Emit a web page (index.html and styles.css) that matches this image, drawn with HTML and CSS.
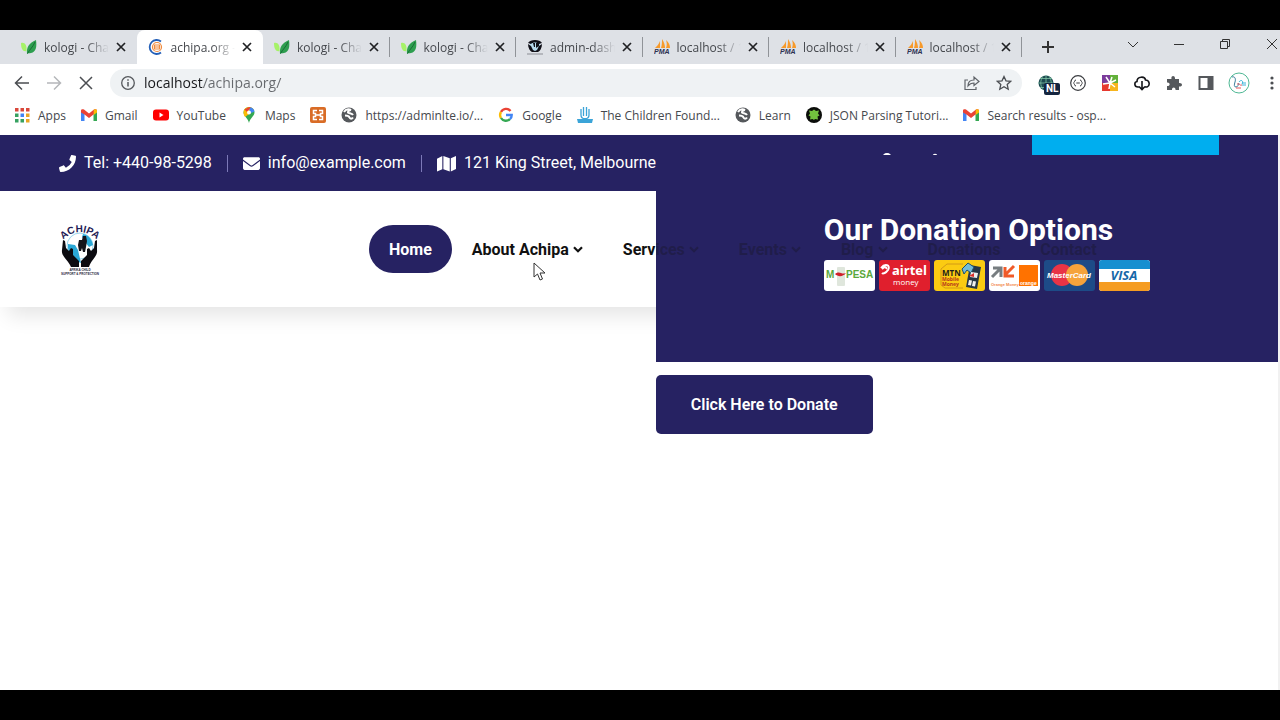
FILE: index.html
```html
<!DOCTYPE html>
<html lang="en">
<head>
    <meta charset="UTF-8">
    <meta name="viewport" content="width=device-width, initial-scale=1.0">
    <title>achipa.org</title>
    <link rel="stylesheet" href="styles.css">
</head>
<body>
    <!-- Shared icons -->
    <svg class="sprite" aria-hidden="true">
        <symbol id="leaf" viewBox="0 0 16 16">
            <path d="M0 4c4-1 6 2 5.500 8C2 13 0 10 0 4z" fill="#a6f268"/>
            <path d="M15 1c1 7 0 12-5 13-2 .4-3 0-4 1-.6-7 2-11 9-14z" fill="#2e9e4f"/>
            <path d="M14 3C12 8 9 10 6.500 14.500" stroke="#176b35" stroke-width="1" fill="none"/>
        </symbol>
        <symbol id="pma" viewBox="0 0 16 16">
            <path d="M6 2v7H1c2-2 4-4 5-7zM8 0c2 3 3 6 3 9H7c1-3 1-6 1-9zM12 1c3 3 4 5 4 8h-4c1-3 1-5 0-8z" fill="#f79a2b"/>
            <text x="0" y="15" class="pma-text">PMA</text>
        </symbol>
        <symbol id="cross" viewBox="0 0 10 10">
            <path d="M1 1l8 8M9 1L1 9" fill="none" stroke="currentColor" stroke-width="1.700"/>
        </symbol>
        <symbol id="globe" viewBox="0 0 16 16">
            <circle cx="8" cy="8" r="7.500" fill="#55585c"/>
            <path d="M3 5c2-3 5-3 7-2-2 0-3 1-3 2.500 1 1 4 .5 5 2.500M4 8.500c3 0 4 .5 4.500 2C9 12 11 12 12 10.500" fill="none" stroke="#fff" stroke-width="2"/>
        </symbol>
        <symbol id="gmail" viewBox="0 0 16 12">
            <path d="M0 2v10h3.500V5z" fill="#4285f4"/>
            <path d="M16 2v10h-3.500V5z" fill="#34a853"/>
            <path d="M0 1.500C0 0 2 0 3 .6l5 4 5-4C14 0 16 0 16 1.500l-3.500 4L8 9 3.500 5.500 0 3.500z" fill="#ea4335"/>
            <path d="M12.700.8C14 0 16 0 16 2v1.500l-3.300 2.600z" fill="#fbbc04"/>
        </symbol>
        <symbol id="caret" viewBox="0 0 10 7">
            <path d="M1 1.200l4 4 4-4" fill="none" stroke="currentColor" stroke-width="2.200"/>
        </symbol>
    </svg>

    <div class="browser">
        <!-- Tab strip -->
        <div class="tab-strip">
            <div class="tabs">
                <div class="tab">
                    <svg class="icon"><use href="#leaf"/></svg>
                    <span class="tab-title">kologi - Chat</span>
                    <button type="button" class="tab-close" aria-label="Close tab"><svg><use href="#cross"/></svg></button>
                </div>
                <div class="tab active">
                    <svg class="icon" viewBox="0 0 16 16">
                        <path d="M13 2.500A7 7 0 1 0 13 13.500" fill="none" stroke="#2460b8" stroke-width="1.800"/>
                        <circle cx="9" cy="8" r="4.500" fill="none" stroke="#f08a3c" stroke-width="1.200"/>
                        <path d="M6.500 6h5v4h-5zM6.500 8h5" fill="none" stroke="#f08a3c" stroke-width="1.200"/>
                    </svg>
                    <span class="tab-title">achipa.org - A</span>
                    <button type="button" class="tab-close" aria-label="Close tab"><svg><use href="#cross"/></svg></button>
                </div>
                <div class="tab">
                    <svg class="icon"><use href="#leaf"/></svg>
                    <span class="tab-title">kologi - Chat</span>
                    <button type="button" class="tab-close" aria-label="Close tab"><svg><use href="#cross"/></svg></button>
                </div>
                <div class="tab">
                    <svg class="icon"><use href="#leaf"/></svg>
                    <span class="tab-title">kologi - Chat</span>
                    <button type="button" class="tab-close" aria-label="Close tab"><svg><use href="#cross"/></svg></button>
                </div>
                <div class="tab">
                    <svg class="icon" viewBox="0 0 16 16">
                        <circle cx="8" cy="7" r="5.500" fill="#b7dcef"/>
                        <path d="M1 4c2-4 12-4 14 0l-3 1c-2-2-6-2-8 0zM1 5l3 2 2 4 2 1 2-1 2-4 3-2c0 4-2 7-4 8H5C3 12 1 9 1 5zM6 4h2v4H7zM9 4h3v3L9 9z" fill="#101018"/>
                        <path d="M0 15h16" stroke="#8b8d94"/>
                    </svg>
                    <span class="tab-title">admin-dashboard</span>
                    <button type="button" class="tab-close" aria-label="Close tab"><svg><use href="#cross"/></svg></button>
                </div>
                <div class="tab">
                    <svg class="icon"><use href="#pma"/></svg>
                    <span class="tab-title">localhost / 12</span>
                    <button type="button" class="tab-close" aria-label="Close tab"><svg><use href="#cross"/></svg></button>
                </div>
                <div class="tab">
                    <svg class="icon"><use href="#pma"/></svg>
                    <span class="tab-title">localhost / 12</span>
                    <button type="button" class="tab-close" aria-label="Close tab"><svg><use href="#cross"/></svg></button>
                </div>
                <div class="tab">
                    <svg class="icon"><use href="#pma"/></svg>
                    <span class="tab-title">localhost / 12</span>
                    <button type="button" class="tab-close" aria-label="Close tab"><svg><use href="#cross"/></svg></button>
                </div>
            </div>
            <button type="button" class="new-tab" aria-label="New tab">
                <svg viewBox="0 0 12 12"><path d="M6 0v12M0 6h12" stroke="currentColor" stroke-width="2"/></svg>
            </button>
            <div class="window-buttons">
                <button type="button" aria-label="Search tabs"><svg viewBox="0 0 12 12"><path d="M1 4l5 5 5-5" fill="none" stroke="currentColor"/></svg></button>
                <button type="button" aria-label="Minimize"><svg viewBox="0 0 12 12"><path d="M1 6.500h10" stroke="currentColor"/></svg></button>
                <button type="button" aria-label="Restore"><svg viewBox="0 0 12 12"><path d="M1.500 3.500h7v7h-7zM3.500 3.500v-2h7v7h-2" fill="none" stroke="currentColor"/></svg></button>
                <button type="button" aria-label="Close"><svg viewBox="0 0 12 12"><path d="M1 1l10 10M11 1L1 11" stroke="currentColor"/></svg></button>
            </div>
        </div>

        <!-- Address bar -->
        <div class="toolbar">
            <button type="button" aria-label="Back"><svg viewBox="0 0 16 16"><path d="M15 8H2M8 1.500L1.500 8 8 14.500" fill="none" stroke="#4b4e52" stroke-width="1.500"/></svg></button>
            <button type="button" aria-label="Forward"><svg viewBox="0 0 16 16"><path d="M1 8h13M8 1.500L14.500 8 8 14.500" fill="none" stroke="#b5b7ba" stroke-width="1.500"/></svg></button>
            <button type="button" aria-label="Stop"><svg viewBox="0 0 16 16"><path d="M2 2l12 12M14 2L2 14" stroke="#4b4e52" stroke-width="1.500"/></svg></button>
            <div class="address">
                <svg class="icon" viewBox="0 0 16 16"><circle cx="8" cy="8" r="6.300" fill="none" stroke="#55585c" stroke-width="1.300"/><path d="M8 7v4.500M8 4.300v1.500" stroke="#55585c" stroke-width="1.500"/></svg>
                <input type="text" aria-label="Address" value="localhost/achipa.org/">
                <button type="button" aria-label="Share"><svg viewBox="0 0 16 16"><path d="M4 5H1v9.500h11V12M4 11c0-4 2-6 6-6V2l5 4.500-5 4V8C7 8 5.500 9 4 11z" fill="none" stroke="#5f6368" stroke-width="1.200"/></svg></button>
                <button type="button" aria-label="Bookmark"><svg viewBox="0 0 16 16"><path d="M8 1.500l2 4.300 4.700.5-3.500 3.200 1 4.700L8 11.800l-4.200 2.400 1-4.700L1.300 6.300 6 5.800z" fill="none" stroke="#4b4e52" stroke-width="1.300"/></svg></button>
            </div>
            <div class="extensions">
                <button type="button" class="badge-host" aria-label="Language">
                    <svg viewBox="0 0 16 16"><circle cx="8" cy="8" r="7.500" fill="#1d4a50"/><path d="M8 0v16M0 8h16M2 3.500h12M2 12.500h12M5 1c-3 5-3 9 0 14M11 1c3 5 3 9 0 14" fill="none" stroke="#7fc3a4" stroke-width=".8"/></svg>
                    <span class="badge">NL</span>
                </button>
                <button type="button" aria-label="JSON viewer"><svg viewBox="0 0 16 16"><circle cx="8" cy="8" r="7.300" fill="#fff" stroke="#3a3c40" stroke-width="1.200"/><path d="M6 5c-2 0-1 2.500-2.500 3C5 8.500 4 11 6 11M10 5c2 0 1 2.500 2.500 3-1.500.5-.5 3-2.500 3M6.300 8h3.500" fill="none" stroke="#3a3c40"/></svg></button>
                <button type="button" aria-label="Colour picker"><svg viewBox="0 0 16 16"><path d="M0 0h8v8H0z" fill="#7b3c9b"/><path d="M8 0h8v8H8z" fill="#63b13a"/><path d="M0 8h8v8H0z" fill="#e6392f"/><path d="M8 8h8v8H8z" fill="#f7b51d"/><path d="M8 8L4 2M8 8l2-6M8 8l6-3M8 8l5 4M8 8l-1 6M8 8L1 9" stroke="#fff" stroke-width="1.500"/></svg></button>
                <button type="button" aria-label="Downloads"><svg viewBox="0 0 16 16"><path d="M5 12H4c-4 0-4-5-1-5.500C3 1 11 1 11.500 5c4 0 5 5.500 1.500 7h-2M8 6v8M5 11.500L8 14.500l3-3" fill="none" stroke="#15161a" stroke-width="1.600"/></svg></button>
                <button type="button" aria-label="Extensions"><svg viewBox="0 0 16 16"><path d="M1 4h4.500c-1-4 4-4 3.500 0H13v4c4-.5 4 4 0 3.500V15H9.500c.5-3.500-4-3.500-3.500 0H1v-4c3.500.5 3.500-4 0-3.500z" fill="#55585c"/></svg></button>
                <button type="button" aria-label="Side panel"><svg viewBox="0 0 16 16"><path d="M1.500 2h13v12h-13z" fill="#fff" stroke="#55585c" stroke-width="2"/><path d="M9.500 2H15v12H9.500z" fill="#55585c"/></svg></button>
                <button type="button" class="avatar" aria-label="Profile"><svg viewBox="0 0 22 22"><circle cx="11" cy="11" r="10" fill="#fff" stroke="#4eb894"/><path d="M4 5c3-1 4 2 3 5s-1 5 1 5 2-2 3-4" fill="none" stroke="#3b7e9c"/><path d="M11 10c2-3 5-1 3 2M15 10v4M17 10v4" fill="none" stroke="#3ab3d8"/><path d="M9 12c2-1 3 2 5 1M8 16h5" fill="none" stroke="#e5555c"/></svg></button>
                <button type="button" aria-label="Menu"><svg viewBox="0 0 16 16"><g fill="#4b4e52"><circle cx="8" cy="3" r="1.600"/><circle cx="8" cy="8" r="1.600"/><circle cx="8" cy="13" r="1.600"/></g></svg></button>
            </div>
        </div>

        <!-- Bookmarks -->
        <nav class="bookmarks" aria-label="Bookmarks">
            <a href="#"><svg class="icon" viewBox="0 0 16 16"><path d="M1 1h3.500v3.500H1zM6.500 1H10v3.500H6.500zM12 1h3.500v3.500H12z" fill="#d9483b"/><path d="M1 6.500h3.500V10H1z" fill="#36a160"/><path d="M6.500 6.500H10V10H6.500z" fill="#4285f4"/><path d="M12 6.500h3.500V10H12z" fill="#e9a624"/><path d="M1 12h3.500v3.500H1zM6.500 12H10v3.500H6.500z" fill="#36a160"/><path d="M12 12h3.500v3.500H12z" fill="#e9a624"/></svg>Apps</a>
            <a href="#"><svg class="icon"><use href="#gmail"/></svg>Gmail</a>
            <a href="#"><svg class="icon" viewBox="0 0 16 16"><rect y="2.500" width="16" height="11" rx="3" fill="#f00"/><path d="M6.500 5.500v5l4-2.500z" fill="#fff"/></svg>YouTube</a>
            <a href="#"><svg class="icon" viewBox="0 0 16 16"><path d="M8 0a5.500 5.500 0 0 0-5.500 5.500C2.500 9 7 11 8 16c1-5 5.500-7 5.500-10.500A5.500 5.500 0 0 0 8 0z" fill="#34a853"/><path d="M8 0a5.500 5.500 0 0 1 5 3.500L4 10C3 8.500 2.500 7 2.500 5.500A5.500 5.500 0 0 1 8 0z" fill="#fbbc04"/><path d="M8 0L3.500 2.500 6 5l4-4.500z" fill="#ea4335"/><path d="M9.500.3C12 1 13 3 13.500 4.500L10 6 8 3.500z" fill="#4285f4"/><circle cx="8" cy="5.500" r="2" fill="#fff"/></svg>Maps</a>
            <a href="#" aria-label="XAMPP"><svg class="icon" viewBox="0 0 16 16"><rect width="16" height="16" rx="2" fill="#d96c26"/><path d="M7 3.500H3.500v3h2v3h-2v3H7M9 3.500h3.500v3h-2v3h2v3H9M6 8h4" fill="none" stroke="#fff" stroke-width="1.500"/></svg></a>
            <a href="#"><svg class="icon"><use href="#globe"/></svg>https://adminlte.io/...</a>
            <a href="#"><svg class="icon" viewBox="0 0 16 16"><g fill="none" stroke-width="2.400"><path d="M12.500 4A5.700 5.700 0 0 0 3 5" stroke="#ea4335"/><path d="M3 5a5.700 5.700 0 0 0 0 6" stroke="#fbbc04"/><path d="M3 11a5.700 5.700 0 0 0 9 1" stroke="#34a853"/><path d="M12 12c1.500-1 1.700-2.500 1.700-4H8" stroke="#4285f4"/></g></svg>Google</a>
            <a href="#"><svg class="icon" viewBox="0 0 16 16"><path d="M0 12h16l-1 4H1z" fill="#3ba4d8"/><path d="M4 2v6c0 5 8 5 8 0V2M6.500 0v9M9.500 0v9" fill="none" stroke="#3ba4d8" stroke-width="1.300"/></svg>The Children Found...</a>
            <a href="#"><svg class="icon"><use href="#globe"/></svg>Learn</a>
            <a href="#"><svg class="icon" viewBox="0 0 16 16"><circle cx="8" cy="8" r="8" fill="#0b0d0a"/><path d="M8 2.500l2 1.500 3-.5-1 3 1.500 2-2 1 .5 3-3-.5L8 13l-1.500-1-2.500.5.500-3-2-1L4 6.500l-1-3L6 4z" fill="#72c13e"/></svg>JSON Parsing Tutori...</a>
            <a href="#"><svg class="icon"><use href="#gmail"/></svg>Search results - osp...</a>
        </nav>

        <!-- Site -->
        <main class="site">
            <div class="topbar">
                <ul class="contact-list">
                    <li><svg viewBox="0 0 16 16"><path d="M15.500.8L12.200 0c-.4 0-.7.100-.9.500L9.800 4c-.1.300 0 .7.300.9L12 6.500A11.500 11.500 0 0 1 6.500 12L4.900 10.100c-.2-.3-.6-.4-.9-.3L.5 11.300c-.4.200-.5.500-.5.900l.8 3.200c.1.400.4.600.8.600C9.600 16 16 9.500 16 1.600c0-.4-.2-.7-.5-.8z" fill="#fff"/></svg>Tel: +440-98-5298</li>
                    <li><svg viewBox="0 0 16 16"><path d="M0 3.500C0 2.600.7 2 1.500 2h13c.8 0 1.500.6 1.500 1.500v.7L8.800 9.600c-.5.300-1.100.3-1.600 0L0 4.200zM0 5.700l6.700 5c.8.500 1.800.5 2.600 0L16 5.700v6.800c0 .8-.7 1.500-1.500 1.500h-13C.7 14 0 13.300 0 12.500z" fill="#fff"/></svg>info@example.com</li>
                    <li><svg viewBox="0 0 18 16"><path d="M0 3.500L5 1v12.500L0 15.500zM6 1l6 2v12.500l-6-2zM13 3l5-2v12l-5 2.500z" fill="#fff"/></svg>121 King Street, Melbourne</li>
                </ul>
                <div class="account">
                    <a href="#" aria-label="Account"><svg viewBox="0 0 16 16"><path d="M8 0a4 4 0 1 1 0 8 4 4 0 0 1 0-8zM1 16c0-8 14-8 14 0z" fill="#fff"/></svg></a>
                    <a href="#" aria-label="Info"><svg viewBox="0 0 16 16"><circle cx="8" cy="2.500" r="2" fill="#fff"/><path d="M6 6h4v10H6z" fill="#fff"/></svg></a>
                </div>
                <a href="#" class="topbar-donate" aria-label="Donate"></a>
            </div>

            <header class="header">
                <a href="#" class="logo" aria-label="Achipa home">
                    <svg viewBox="0 0 42 54">
                        <defs><path id="logoArc" d="M6 16Q21 4 36 16"/></defs>
                        <circle cx="21" cy="24" r="13" fill="#fff" stroke="#9bd7ee" stroke-width="1"/>
                        <path d="M24 12c6 1 9 6 10 11l-4 2-4-5-3-5zM9 22l7 1 3 5 3 13c-7-2-14-9-13-19z" fill="#2ba8d6"/>
                        <path d="M20 18h3l1-4h3l1 5-1 6-1 5h-2l-1-4-1 3h-2l-1-6z" fill="#15141b"/>
                        <path d="M4 18l2 1 1 7 3 3 2-3 2 1v6l6 6v6h-8C9 38 2 34 3 28zM38 18l-2 1-1 7-3 3-2-3-2 1v6l-6 6v6h8c2-7 9-11 8-17z" fill="#0c0b10"/>
                        <text class="logo-name"><textPath href="#logoArc" startOffset="50%">ACHIPA</textPath></text>
                        <text x="21" y="49" class="logo-tag">AFRIKA CHILD</text>
                        <text x="21" y="53" class="logo-tag">SUPPORT &amp; PROTECTION</text>
                    </svg>
                </a>
                <nav class="main-nav" aria-label="Main">
                    <a href="#" class="current">Home</a>
                    <a href="#">About Achipa<svg><use href="#caret"/></svg></a>
                    <a href="#">Services<svg><use href="#caret"/></svg></a>
                    <a href="#">Events<svg><use href="#caret"/></svg></a>
                    <a href="#">Blog<svg><use href="#caret"/></svg></a>
                    <a href="#">Donations</a>
                    <a href="#">Contact</a>
                </nav>
            </header>

            <div class="donation-base"></div>
            <section class="donation">
                <div class="donation-panel">
                    <h2>Our Donation Options</h2>
                    <div class="cards">
                        <svg viewBox="0 0 51 31" role="img" aria-label="M-Pesa"><rect width="51" height="31" rx="3" fill="#fff"/><rect x="13" y="7" width="8" height="19" rx="1" fill="#dfe6dc"/><text x="2" y="18" class="pesa">M</text><path d="M11 14c5-4 6 1 11-1-3 4-8 4-11 1z" fill="#d0202b"/><text x="22" y="18" class="pesa">PESA</text></svg>
                        <svg viewBox="0 0 51 31" role="img" aria-label="Airtel Money"><rect width="51" height="31" rx="3" fill="#e01f2d"/><path d="M2 8c4-5 10-3 7 2-2 3-5 4-6 3M3 9c3-3 5-2 4 0" fill="none" stroke="#fff" stroke-width="2"/><text x="13" y="15" class="airtel">airtel</text><text x="14" y="25" class="money">money</text></svg>
                        <svg viewBox="0 0 51 31" role="img" aria-label="MTN Mobile Money"><rect width="51" height="31" rx="3" fill="#fbcb12"/><path d="M7 9l6-5h16M7 9v16l4 3h18" fill="none" stroke="#d39a16"/><text x="8" y="16" class="mtn">MTN</text><text x="8" y="21" class="mtn-sub">Mobile</text><text x="8" y="26" class="mtn-sub">Money</text><path d="M36 5l11 2-4 22-11-2z" fill="#263746"/><path d="M28 9l6-6 6 4-3 6-4-3-3 4z" fill="#75bcd6" stroke="#1b506d"/><path d="M37 12l7 1-1 5-7-1z" fill="#eee"/><path d="M35 20l3 .5-1 5-3-.5zM39 21l3 .5-1 5-3-.5z" fill="#f0f0f0"/><path d="M35 16l5-3v4z" fill="#d9302c"/></svg>
                        <svg viewBox="0 0 51 31" role="img" aria-label="Orange Money"><rect width="51" height="31" rx="3" fill="#fff"/><path d="M3 17L11 9M4 8h8v9" fill="none" stroke="#777d80" stroke-width="3"/><path d="M25 6l-8 8M16 7v9h9" fill="none" stroke="#f05a28" stroke-width="3"/><text x="2" y="26" class="orange-sub">Orange Money</text><rect x="30" y="5" width="19" height="21" fill="#ff7200"/><text x="31" y="25" class="orange-tag">orange</text></svg>
                        <svg viewBox="0 0 51 31" role="img" aria-label="MasterCard"><rect width="51" height="31" rx="3" fill="#1d4b87"/><circle cx="18" cy="15" r="11" fill="#e83446"/><circle cx="33" cy="15" r="11" fill="#f5a33b"/><text x="25" y="18" class="mastercard">MasterCard</text></svg>
                        <svg viewBox="0 0 51 31" role="img" aria-label="Visa"><rect width="51" height="31" rx="3" fill="#fff"/><path d="M0 9V3a3 3 0 0 1 3-3h45a3 3 0 0 1 3 3v6z" fill="#168fd0"/><path d="M0 22v6a3 3 0 0 0 3 3h45a3 3 0 0 0 3-3v-6z" fill="#f59c22"/><text x="25" y="20" class="visa">VISA</text></svg>
                    </div>
                </div>
                <button type="button" class="donate-btn">Click Here to Donate</button>
            </section>

            <svg class="cursor" viewBox="0 0 13 19" aria-hidden="true"><path d="M1 1v14l3.500-3 2.500 6 2.500-1-2.500-6H12z" fill="#fff" stroke="#333"/></svg>
        </main>
    </div>
</body>
</html>
```
FILE: styles.css
```css
/* Global Styles */
* {
    box-sizing: border-box;
    margin: 0;
    padding: 0;
}

body {
    display: flex;
    min-height: 100vh;
    padding: 30px 0;
    background-color: #000;
    font-family: Roboto, sans-serif;
    overflow: hidden;
}

a {
    color: inherit;
    text-decoration: none;
}

button {
    border: none;
    background: none;
    font-family: inherit;
    cursor: pointer;
}

.sprite {
    position: absolute;
    width: 0;
    height: 0;
}

.icon {
    flex: none;
    width: 16px;
    height: 16px;
}

.browser {
    flex: 1;
    min-width: 0;
    display: flex;
    flex-direction: column;
    background-color: #fff;
}

/* Tab Strip */
.tab-strip {
    display: flex;
    height: 34px;
    padding-left: 10px;
    background-color: #dee1e6;
    font-family: "Open Sans", sans-serif;
    font-size: 12px;
    color: #45484d;
}

.tabs {
    flex: none;
    display: grid;
    grid-template-columns: repeat(8, 1fr);
    width: 80%;
    padding-right: 4px;
}

.tab {
    display: flex;
    align-items: center;
    gap: 7px;
    min-width: 0;
    padding: 0 11px;
    background: linear-gradient(#909398, #909398) right center / 1px 20px no-repeat;
}

.tab.active,
.tab:first-child {
    background: none;
}

.tab.active {
    background-color: #fff;
    border-radius: 8px 8px 0 0;
}

.tab-title {
    flex: 1;
    overflow: hidden;
    white-space: nowrap;
    -webkit-mask-image: linear-gradient(to right, #000 65%, transparent);
    mask-image: linear-gradient(to right, #000 65%, transparent);
}

.tab-close {
    display: flex;
    color: #202124;
}

.tab-close svg {
    width: 10px;
    height: 10px;
}

.new-tab {
    padding: 0 16px;
    color: #333;
}

.new-tab svg {
    display: block;
    width: 12px;
    height: 12px;
}

.window-buttons {
    display: flex;
    align-items: flex-start;
    margin-left: auto;
}

.window-buttons button {
    display: flex;
    justify-content: center;
    width: 46px;
    padding-top: 8px;
    color: #333;
}

.window-buttons button:last-child {
    justify-content: flex-end;
    width: 32px;
    padding-right: 2px;
}

.window-buttons svg {
    width: 12px;
    height: 12px;
}

/* Toolbar */
.toolbar {
    display: flex;
    align-items: center;
    gap: 16px;
    height: 38px;
    padding-left: 14px;
}

.toolbar button {
    display: flex;
}

.toolbar button svg {
    width: 16px;
    height: 16px;
}

.address {
    flex: 1;
    display: flex;
    align-items: center;
    gap: 16px;
    height: 28px;
    padding: 0 10px;
    border-radius: 14px;
    background-color: #eff2f4;
}

.address input {
    flex: 1;
    border: none;
    outline: none;
    margin-left: -8px;
    padding-bottom: 1px;
    font-family: "Open Sans", sans-serif;
    font-size: 14px;
    background: linear-gradient(to right, #17181b 59px, #66696d 59px);
    -webkit-background-clip: text;
    background-clip: text;
    -webkit-text-fill-color: transparent;
}

.extensions {
    display: flex;
    align-items: center;
    gap: 16px;
}

.toolbar .avatar svg {
    width: 22px;
    height: 22px;
}

.avatar {
    margin: 0 -2px;
}

.badge-host {
    position: relative;
}

.badge {
    position: absolute;
    top: 8px;
    left: 6px;
    padding: 0 2px;
    border-radius: 2px;
    background-color: #14253f;
    color: #fff;
    font-size: 10px;
    font-weight: bold;
    line-height: 12px;
}

/* Bookmarks */
.bookmarks {
    display: flex;
    align-items: center;
    gap: 15px;
    height: 33px;
    padding: 0 14px 7px;
    font-family: "Open Sans", sans-serif;
    font-size: 12px;
    color: #45484d;
    white-space: nowrap;
}

.bookmarks a {
    display: flex;
    align-items: center;
    gap: 8px;
}

/* Site */
.site {
    position: relative;
    flex: 1;
    border-right: 2px solid #f1f1f1;
    color: #111;
}

.topbar {
    display: flex;
    align-items: center;
    height: 56px;
    padding: 0 59px;
    background-color: #262262;
    color: #fff;
    font-size: 16px;
}

.contact-list {
    display: flex;
    list-style: none;
    white-space: nowrap;
}

.contact-list li {
    display: flex;
    align-items: center;
    gap: 8px;
    line-height: 16px;
}

.contact-list li + li {
    margin-left: 15px;
    padding-left: 15px;
    border-left: 1px solid #7c79b8;
}

.contact-list svg {
    height: 17px;
}

.account {
    display: flex;
    gap: 28px;
    margin: 0 87px 0 auto;
}

.account svg {
    display: block;
    width: 20px;
    height: 20px;
}

.topbar-donate {
    align-self: stretch;
    width: 187px;
    background-color: #00aeef;
}

/* Header */
.header {
    display: grid;
    grid-template-columns: 310px 1fr;
    align-items: center;
    height: 116px;
    padding: 0 59px;
    background-color: #fff;
    box-shadow: 0 16px 20px -8px rgba(0, 0, 0, 0.11);
}

.logo svg {
    display: block;
    width: 42px;
    height: 54px;
}

.main-nav {
    position: relative;
    z-index: 2;
    display: flex;
    font-size: 16px;
    font-weight: 700;
    white-space: nowrap;
}

.main-nav a {
    display: flex;
    align-items: center;
    gap: 4px;
    height: 48px;
    padding: 0 20px;
}

.main-nav a.current {
    border-radius: 24px;
    background-color: #262262;
    color: #fff;
}

.main-nav svg {
    width: 10px;
    height: 7px;
}

/* Donation: a solid base behind the menu, a see-through panel over it */
.donation,
.donation-base {
    position: absolute;
    top: 20px;
    right: 0;
    width: calc(49% - 4px);
}

.donation-base {
    z-index: 1;
    height: 207px;
    background-color: #262262;
}

.donation {
    z-index: 3;
}

.donation-panel {
    height: 207px;
    padding: 55px 0 0 27%;
    background-color: rgba(38, 34, 98, 0.7);
    color: #fff;
}

.donation-panel h2 {
    font-size: 30px;
    font-weight: 700;
    line-height: 40px;
    white-space: nowrap;
}

.cards {
    display: flex;
    gap: 4px;
    margin-top: 10px;
}

.cards svg {
    flex: none;
    width: 51px;
    height: 31px;
}

.donate-btn {
    margin-top: 13px;
    padding: 0 35px;
    border-radius: 5px;
    background-color: #262262;
    color: #fff;
    font-size: 16px;
    font-weight: 600;
    line-height: 59px;
}

.cursor {
    position: absolute;
    z-index: 4;
    top: 127px;
    left: 533px;
    width: 13px;
    height: 19px;
}

/* Lettering inside the logos */
.pma-text {
    font: italic bold 7px "Liberation Sans", sans-serif;
    fill: #2d3052;
}

.logo-name {
    font: bold 10px "Liberation Sans", sans-serif;
    fill: #1f1c55;
    text-anchor: middle;
}

.logo-tag {
    font: bold 3px "Liberation Sans", sans-serif;
    fill: #26233c;
    text-anchor: middle;
}

.pesa {
    font: bold 10px "Liberation Sans", sans-serif;
    fill: #5aa83c;
}

.airtel {
    font: bold 13px "Open Sans", sans-serif;
    fill: #fff;
}

.money {
    font: 8px "Open Sans", sans-serif;
    fill: #fff;
}

.mtn {
    font: bold 8px "Open Sans", sans-serif;
    fill: #1d1d1b;
}

.mtn-sub {
    font: bold 5px "Open Sans", sans-serif;
    fill: #b5371c;
}

.orange-sub {
    font: bold 4px "Liberation Sans", sans-serif;
    fill: #f28a4c;
}

.orange-tag {
    font: bold 5px "Liberation Sans", sans-serif;
    fill: #fff;
}

.mastercard {
    font: italic bold 8px "Liberation Sans", sans-serif;
    fill: #fff;
    text-anchor: middle;
}

.visa {
    font: italic bold 13px "Open Sans", sans-serif;
    fill: #1767a8;
    text-anchor: middle;
}
```
